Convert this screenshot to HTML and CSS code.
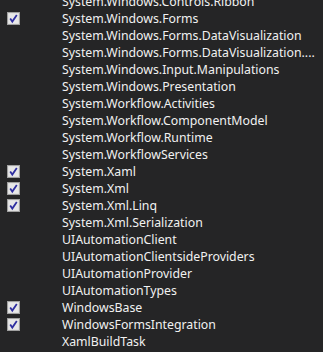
FILE: index.html
```html
<!DOCTYPE html>
<html>
<head>
<meta charset="utf-8">
<link rel="stylesheet" href="styles.css">
</head>
<body>
<ul class="list">
  <li class="row"><span class="box"></span><span class="name">System.Windows.Controls.Ribbon</span></li>
  <li class="row"><span class="box checked"><svg viewBox="0 0 13 13" width="13" height="13"><rect x="0.5" y="0.5" width="12" height="12" fill="#d9d9d9" stroke="#a0a0a0"/><rect x="1.5" y="1.5" width="10" height="10" fill="#e8e8e8"/><path d="M3.2 6.6 L5.3 9.6 L9.8 3" fill="none" stroke="#2f2fa0" stroke-width="1.8"/></svg></span><span class="name">System.Windows.Forms</span></li>
  <li class="row"><span class="box"></span><span class="name">System.Windows.Forms.DataVisualization</span></li>
  <li class="row"><span class="box"></span><span class="name">System.Windows.Forms.DataVisualization....</span></li>
  <li class="row"><span class="box"></span><span class="name">System.Windows.Input.Manipulations</span></li>
  <li class="row"><span class="box"></span><span class="name">System.Windows.Presentation</span></li>
  <li class="row"><span class="box"></span><span class="name">System.Workflow.Activities</span></li>
  <li class="row"><span class="box"></span><span class="name">System.Workflow.ComponentModel</span></li>
  <li class="row"><span class="box"></span><span class="name">System.Workflow.Runtime</span></li>
  <li class="row"><span class="box"></span><span class="name">System.WorkflowServices</span></li>
  <li class="row"><span class="box checked"><svg viewBox="0 0 13 13" width="13" height="13"><rect x="0.5" y="0.5" width="12" height="12" fill="#d9d9d9" stroke="#a0a0a0"/><rect x="1.5" y="1.5" width="10" height="10" fill="#e8e8e8"/><path d="M3.2 6.6 L5.3 9.6 L9.8 3" fill="none" stroke="#2f2fa0" stroke-width="1.8"/></svg></span><span class="name">System.Xaml</span></li>
  <li class="row"><span class="box checked"><svg viewBox="0 0 13 13" width="13" height="13"><rect x="0.5" y="0.5" width="12" height="12" fill="#d9d9d9" stroke="#a0a0a0"/><rect x="1.5" y="1.5" width="10" height="10" fill="#e8e8e8"/><path d="M3.2 6.6 L5.3 9.6 L9.8 3" fill="none" stroke="#2f2fa0" stroke-width="1.8"/></svg></span><span class="name">System.Xml</span></li>
  <li class="row"><span class="box checked"><svg viewBox="0 0 13 13" width="13" height="13"><rect x="0.5" y="0.5" width="12" height="12" fill="#d9d9d9" stroke="#a0a0a0"/><rect x="1.5" y="1.5" width="10" height="10" fill="#e8e8e8"/><path d="M3.2 6.6 L5.3 9.6 L9.8 3" fill="none" stroke="#2f2fa0" stroke-width="1.8"/></svg></span><span class="name">System.Xml.Linq</span></li>
  <li class="row"><span class="box"></span><span class="name">System.Xml.Serialization</span></li>
  <li class="row"><span class="box"></span><span class="name">UIAutomationClient</span></li>
  <li class="row"><span class="box"></span><span class="name">UIAutomationClientsideProviders</span></li>
  <li class="row"><span class="box"></span><span class="name">UIAutomationProvider</span></li>
  <li class="row"><span class="box"></span><span class="name">UIAutomationTypes</span></li>
  <li class="row"><span class="box checked"><svg viewBox="0 0 13 13" width="13" height="13"><rect x="0.5" y="0.5" width="12" height="12" fill="#d9d9d9" stroke="#a0a0a0"/><rect x="1.5" y="1.5" width="10" height="10" fill="#e8e8e8"/><path d="M3.2 6.6 L5.3 9.6 L9.8 3" fill="none" stroke="#2f2fa0" stroke-width="1.8"/></svg></span><span class="name">WindowsBase</span></li>
  <li class="row"><span class="box checked"><svg viewBox="0 0 13 13" width="13" height="13"><rect x="0.5" y="0.5" width="12" height="12" fill="#d9d9d9" stroke="#a0a0a0"/><rect x="1.5" y="1.5" width="10" height="10" fill="#e8e8e8"/><path d="M3.2 6.6 L5.3 9.6 L9.8 3" fill="none" stroke="#2f2fa0" stroke-width="1.8"/></svg></span><span class="name">WindowsFormsIntegration</span></li>
  <li class="row"><span class="box"></span><span class="name">XamlBuildTask</span></li>
</ul>
</body>
</html>
```
FILE: styles.css
```css
html, body {
  margin: 0;
  padding: 0;
  background: #252526;
  overflow: hidden;
  height: 352px;
}
.list {
  list-style: none;
  margin: -7px 0 0 0;
  padding: 0;
  font-family: "Noto Sans", "Noto Sans CJK SC", sans-serif;
  font-size: 12.3px;
  color: #f1f1f1;
}
.row {
  display: flex;
  align-items: center;
  height: 17px;
}
.box {
  width: 13px;
  height: 13px;
  margin-left: 7px;
  margin-right: 42px;
  flex: none;
  display: flex;
}
.name {
  white-space: nowrap;
  line-height: 17px;
}
```
